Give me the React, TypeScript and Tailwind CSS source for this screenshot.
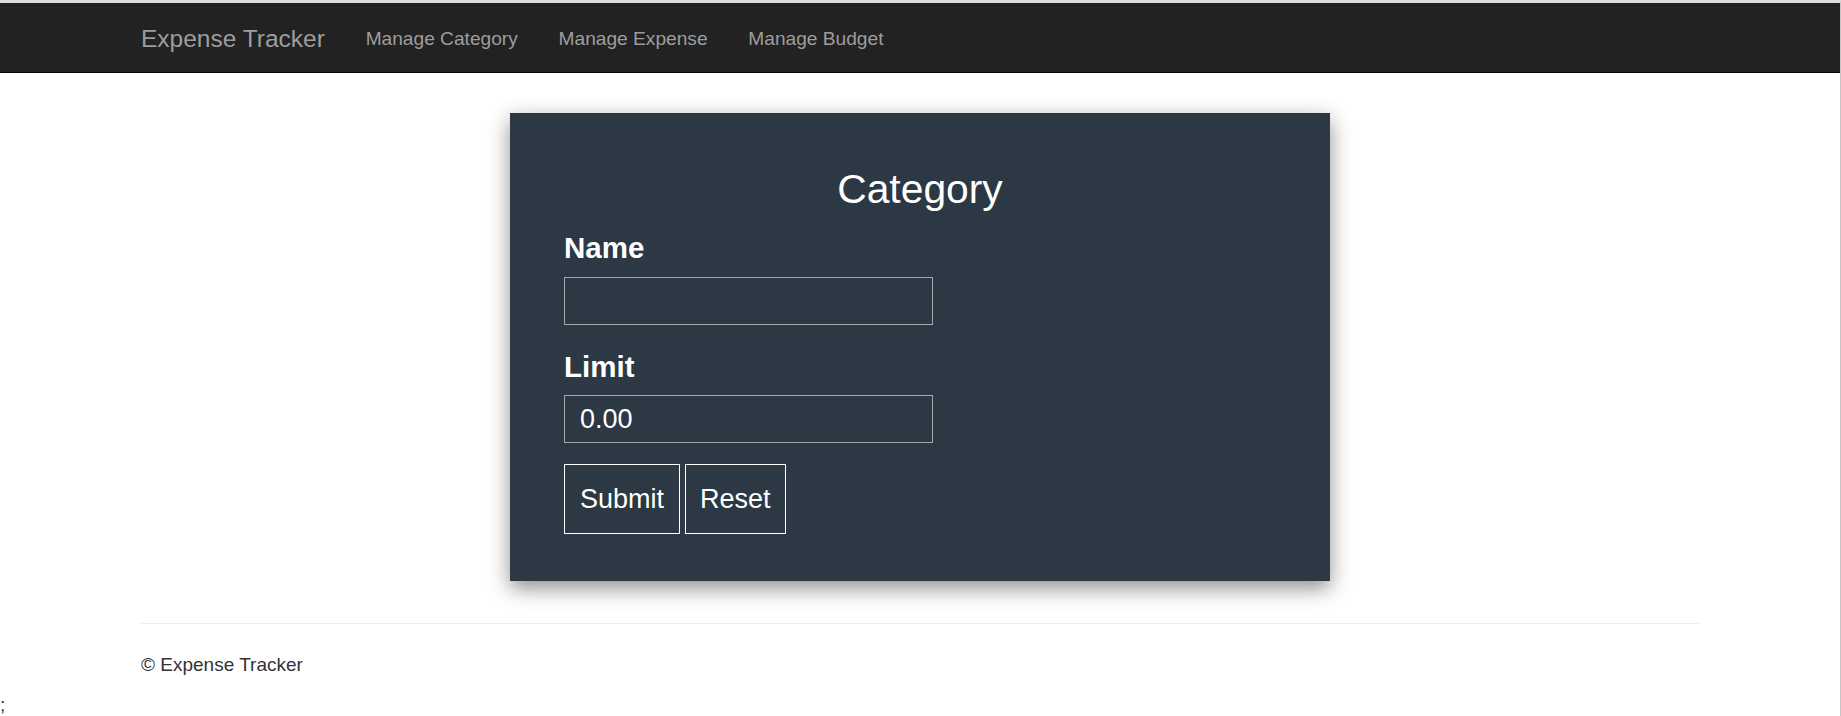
import React from "react";

export default function App() {
  return (
    <div className="h-[716px] overflow-hidden bg-white border-t-[3px] border-t-[#dedede] border-r border-r-[#c6c6c6] font-['Liberation_Sans',Arial,sans-serif] text-[19px] leading-[27.2px] text-[#333]">
      <nav className="h-[70px] bg-[#222222] border-b border-b-[#080808]">
        <div className="w-[1558px] mx-auto h-full flex items-center pt-[2px]">
          <a className="text-[24.5px] leading-[27.2px] text-[#9d9d9d] pr-[20.4px]">Expense Tracker</a>
          <ul className="flex items-center">
            <li className="px-[20.4px] text-[19.15px] leading-[27.2px] text-[#9d9d9d]">Manage Category</li>
            <li className="px-[20.4px] text-[19.15px] leading-[27.2px] text-[#9d9d9d]">Manage Expense</li>
            <li className="px-[20.4px] text-[19.15px] leading-[27.2px] text-[#9d9d9d]">Manage Budget</li>
          </ul>
        </div>
      </nav>

      <main className="w-[1558px] mx-auto pt-[40px]">
        <div className="w-[820px] mx-auto bg-[#2c3844] shadow-[0_7px_20px_rgba(0,0,0,0.45)] pt-[54px] pb-[47px] px-[54px] text-white">
          <h2 className="text-center text-[40.8px] leading-[45px] font-normal">Category</h2>
          <form onSubmit={(e) => e.preventDefault()}>
            <label className="block mt-[18px] text-[29.5px] leading-[35px] font-bold">Name</label>
            <input
              type="text"
              className="block mt-[12px] w-[369px] h-[48px] border border-[#a2aaae] bg-transparent px-[15px] text-[27px] text-white outline-none"
            />
            <label className="block mt-[24px] text-[29.5px] leading-[35px] font-bold">Limit</label>
            <input
              type="text"
              defaultValue="0.00"
              className="block mt-[11px] w-[369px] h-[48px] border border-[#a2aaae] bg-transparent px-[15px] text-[27px] text-white outline-none"
            />
            <div className="mt-[21px] flex gap-[5px]">
              <button type="submit" className="border border-white bg-transparent px-[15px] py-[15px] text-[27px] leading-[38px] text-white">
                Submit
              </button>
              <button type="reset" className="border border-white bg-transparent px-[14px] py-[15px] text-[27px] leading-[38px] text-white">
                Reset
              </button>
            </div>
          </form>
        </div>

        <hr className="mt-[41.5px] border-0 border-t border-t-[#eeeeee]" />
        <footer className="mt-[27.2px] mb-[13.6px]">
          <p>© Expense Tracker</p>
        </footer>
      </main>
      <div>;</div>
    </div>
  );
}
